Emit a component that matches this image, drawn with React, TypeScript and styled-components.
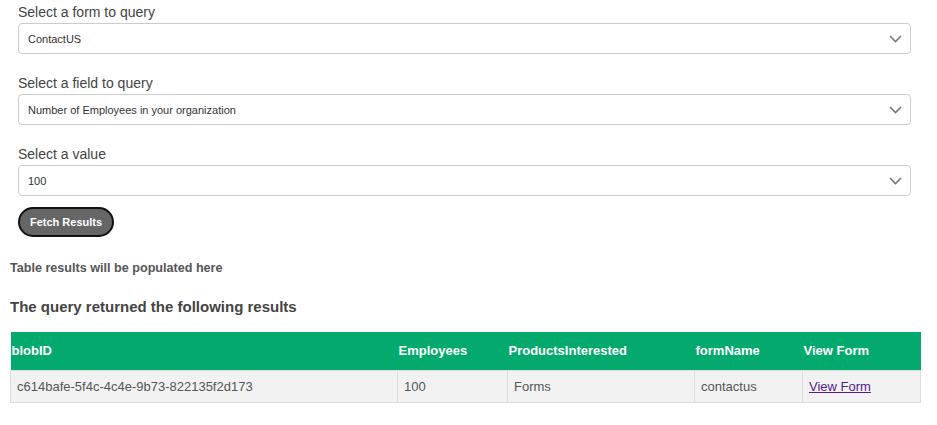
import React from "react";
import styled, { createGlobalStyle } from "styled-components";

const GlobalStyle = createGlobalStyle`
  body {
    margin: 0;
    background: #fff;
    font-family: "Liberation Sans", Arial, sans-serif;
  }
`;

const Page = styled.div`
  padding: 4px 17px 0 10px;
`;

const QueryForm = styled.form`
  padding: 0 9px 0 8px;
`;

const Field = styled.div`
  display: flex;
  flex-direction: column;
  margin-bottom: 21px;

  &:last-of-type {
    margin-bottom: 11px;
  }
`;

const Label = styled.label`
  font-size: 14px;
  line-height: 16px;
  color: #444;
  margin-bottom: 3px;
`;

const SelectBox = styled.div`
  position: relative;
  height: 31px;
  box-sizing: border-box;
  border: 1px solid #ccc;
  border-radius: 4px;
  display: flex;
  align-items: center;
  padding: 0 40px 0 9px;
  font-size: 11px;
  color: #333;
`;

const Chevron = styled.svg`
  position: absolute;
  right: 8px;
  top: 50%;
  transform: translateY(-50%);
`;

const FetchButton = styled.button`
  width: 96px;
  height: 30px;
  background: #666;
  color: #fff;
  border: 2px solid #111;
  border-radius: 15px;
  font-family: inherit;
  font-size: 11px;
  font-weight: bold;
  cursor: pointer;
`;

const Note = styled.p`
  margin: 24px 0 0;
  font-size: 12.6px;
  line-height: 14px;
  font-weight: bold;
  color: #555;
`;

const Heading = styled.h3`
  margin: 23px 0 0;
  font-size: 15px;
  line-height: 18px;
  font-weight: bold;
  color: #444;
`;

const Table = styled.table`
  margin-top: 16px;
  width: 910px;
  border-collapse: collapse;
  table-layout: fixed;
  font-size: 13px;
`;

const Th = styled.th<{ $w: number }>`
  box-sizing: border-box;
  width: ${(p) => p.$w}px;
  background: #04aa6d;
  color: #fff;
  text-align: left;
  font-weight: bold;
  padding: 12px 0 12px 1px;
  line-height: 14px;
`;

const Td = styled.td`
  background: #f2f2f2;
  border: 1px solid #ddd;
  padding: 8px 7px 8px 6px;
  line-height: 15px;
  color: #555;
`;

const FormLink = styled.a`
  color: #551a8b;
  text-decoration: underline;
`;

const fields = [
  { label: "Select a form to query", value: "ContactUS" },
  { label: "Select a field to query", value: "Number of Employees in your organization" },
  { label: "Select a value", value: "100" },
];

const columns = [
  { name: "blobID", w: 387 },
  { name: "Employees", w: 110 },
  { name: "ProductsInterested", w: 187 },
  { name: "formName", w: 108 },
  { name: "View Form", w: 118 },
];

const App: React.FC = () => {
  return (
    <Page>
      <GlobalStyle />
      <QueryForm onSubmit={(e) => e.preventDefault()}>
        {fields.map((f) => (
          <Field key={f.label}>
            <Label>{f.label}</Label>
            <SelectBox>
              {f.value}
              <Chevron width="13" height="8" viewBox="0 0 13 8">
                <path d="M1 1l5.5 5.5L12 1" fill="none" stroke="#777" strokeWidth="1.6" />
              </Chevron>
            </SelectBox>
          </Field>
        ))}
        <FetchButton type="submit">Fetch Results</FetchButton>
      </QueryForm>
      <Note>Table results will be populated here</Note>
      <Heading>The query returned the following results</Heading>
      <Table>
        <thead>
          <tr>
            {columns.map((c) => (
              <Th key={c.name} $w={c.w}>
                {c.name}
              </Th>
            ))}
          </tr>
        </thead>
        <tbody>
          <tr>
            <Td>c614bafe-5f4c-4c4e-9b73-822135f2d173</Td>
            <Td>100</Td>
            <Td>Forms</Td>
            <Td>contactus</Td>
            <Td>
              <FormLink href="#">View Form</FormLink>
            </Td>
          </tr>
        </tbody>
      </Table>
    </Page>
  );
};

export default App;
